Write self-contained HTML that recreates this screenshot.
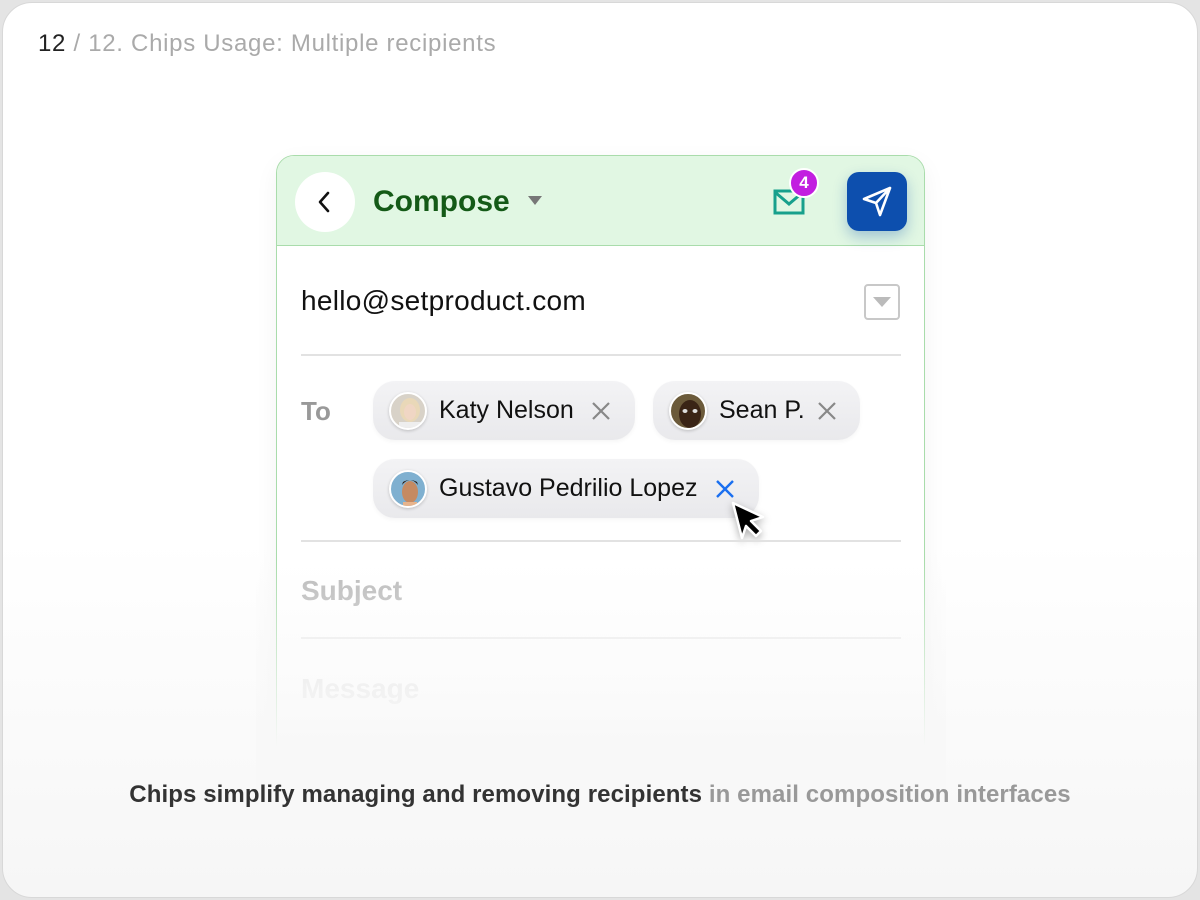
<!DOCTYPE html>
<html><head><meta charset="utf-8">
<style>
*{box-sizing:border-box;margin:0;padding:0}
body{width:1200px;height:900px;background:#e4e4e4;font-family:"Liberation Sans",sans-serif;position:relative;overflow:hidden}
.frame{position:absolute;left:2px;top:2px;width:1196px;height:896px;border-radius:30px;background:linear-gradient(#fff 0,#fff 60%,#f6f6f6 100%);border:1px solid #d8d8d8}
.title{position:absolute;left:38px;top:30px;font-size:24px;color:#aaa;letter-spacing:0.7px}
.title b{font-weight:normal;color:#222}
.card{position:absolute;left:276px;top:155px;width:649px;height:640px;border:1px solid #a9dcab;border-radius:18px;background:#fff;overflow:hidden;box-shadow:0 8px 24px rgba(0,0,0,0.05)}
.hdr{position:absolute;left:0;top:0;width:100%;height:90px;background:#e1f7e3;border-bottom:1px solid #a9dcab}
.back{position:absolute;left:18px;top:16px;width:60px;height:60px;border-radius:30px;background:#fff}
.compose{position:absolute;left:96px;top:29px;font-size:30px;font-weight:bold;color:#145a17}
.send{position:absolute;left:570px;top:16px;width:60px;height:59px;border-radius:12px;background:#0d4fae;box-shadow:0 6px 14px rgba(13,79,174,0.3)}
.badge{position:absolute;left:512px;top:12px;width:30px;height:30px;border-radius:15px;background:#c21ee0;border:2px solid #fff;color:#fff;font-size:17px;font-weight:bold;text-align:center;line-height:26px}
.email{position:absolute;left:24px;top:129px;font-size:28px;color:#111;letter-spacing:0.3px}
.line{position:absolute;left:24px;width:600px;height:2px;background:#e2e2e2}
.to{position:absolute;left:24px;top:240px;font-size:26px;color:#999;font-weight:bold}
.chip{position:absolute;height:59px;border-radius:22px;background:linear-gradient(#f3f3f5,#e9e9ec);font-size:25px;color:#111;box-shadow:0 2px 4px rgba(0,0,0,0.04)}
.chip .av{position:absolute;left:16px;top:11px;width:38px;height:38px;border-radius:19px;border:2px solid #fff;overflow:hidden;box-shadow:0 1px 3px rgba(0,0,0,.2)}
.chip span{position:absolute;left:66px;top:15px}
.chip svg.x{position:absolute;top:20px}
.ph{position:absolute;left:24px;font-size:28px;font-weight:bold}
.fade{position:absolute;left:256px;top:560px;width:690px;height:260px;background:linear-gradient(rgba(249,249,249,0) 0,rgba(249,249,249,0.6) 45%,#f8f8f8 72%)}
.cap{position:absolute;left:0;width:1200px;top:781px;text-align:center;font-size:24px;font-weight:bold;color:#999;letter-spacing:0.1px}
.cap b{color:#333}
</style></head><body>
<div class="frame"></div>
<div class="title"><b>12</b> / 12. Chips Usage: Multiple recipients</div>
<div class="card">
 <div class="hdr">
  <div class="back"><svg width="60" height="60"><path d="M33 21 L25 30 L33 39" fill="none" stroke="#111" stroke-width="2.6" stroke-linecap="round" stroke-linejoin="round"/></svg></div>
  <div class="compose">Compose</div>
  <svg style="position:absolute;left:251px;top:40px" width="14" height="10"><path d="M0 0H14L7 9Z" fill="#777"/></svg>
  <svg style="position:absolute;left:496px;top:32px" width="34" height="28"><rect x="2" y="3" width="28" height="22" fill="none" stroke="#17a08c" stroke-width="3"/><path d="M3 5 L16 16 L29 5" fill="none" stroke="#17a08c" stroke-width="3"/></svg>
  <div class="badge">4</div>
  <div class="send"><svg width="60" height="59"><path d="M43 16 L17 27 L29 31 L33 43 Z M43 16 L29 31" fill="none" stroke="#fff" stroke-width="2.6" stroke-linejoin="round" stroke-linecap="round"/></svg></div>
 </div>
 <div class="email">hello@setproduct.com</div>
 <svg style="position:absolute;left:587px;top:128px" width="37" height="36"><rect x="1" y="1" width="34" height="34" rx="3" fill="#fff" stroke="#c8c8c8" stroke-width="2"/><path d="M9 13H27L18 23Z" fill="#bbb"/></svg>
 <div class="line" style="top:198px"></div>
 <div class="to">To</div>
 <div class="chip" style="left:96px;top:225px;width:262px">
  <div class="av" style="background:#d8d2c8"><svg width="38" height="38"><ellipse cx="19" cy="16" rx="10" ry="12" fill="#e9d8b8"/><ellipse cx="19" cy="18" rx="6" ry="8" fill="#f0d6c4"/><rect x="8" y="28" width="22" height="12" fill="#eee"/></svg></div>
  <span>Katy Nelson</span>
  <svg class="x" style="left:218px" width="20" height="20"><path d="M2 2L18 18M18 2L2 18" stroke="#888" stroke-width="2.2"/></svg>
 </div>
 <div class="chip" style="left:376px;top:225px;width:207px">
  <div class="av" style="background:#6b5a3a"><svg width="38" height="38"><ellipse cx="19" cy="20" rx="11" ry="14" fill="#3a2416"/><ellipse cx="14" cy="17" rx="2.5" ry="2" fill="#ddd"/><ellipse cx="24" cy="17" rx="2.5" ry="2" fill="#ddd"/></svg></div>
  <span>Sean P.</span>
  <svg class="x" style="left:164px" width="20" height="20"><path d="M2 2L18 18M18 2L2 18" stroke="#888" stroke-width="2.2"/></svg>
 </div>
 <div class="chip" style="left:96px;top:303px;width:386px">
  <div class="av" style="background:#7fb0d0"><svg width="38" height="38"><ellipse cx="19" cy="20" rx="8" ry="11" fill="#c58a62"/><path d="M11 13 Q19 3 27 13 L26 10 Q19 6 12 10Z" fill="#2a1a10"/><rect x="12" y="30" width="14" height="8" fill="#e7b48c"/></svg></div>
  <span>Gustavo Pedrilio Lopez</span>
  <svg class="x" style="left:342px" width="20" height="20"><path d="M2 2L18 18M18 2L2 18" stroke="#1a6ff0" stroke-width="2.4"/></svg>
 </div>
 <svg style="position:absolute;left:452px;top:344px;filter:drop-shadow(0 3px 4px rgba(0,0,0,.3))" width="44" height="44"><path d="M4 3 L34 17 L22 21 L32 31 L27 36 L17 26 L13 38 Z" fill="#000" stroke="#fff" stroke-width="2.5" stroke-linejoin="round"/></svg>
 <div class="line" style="top:384px"></div>
 <div class="ph" style="top:419px;color:#bbb">Subject</div>
 <div class="line" style="top:481px;background:#ececec"></div>
 <div class="ph" style="top:517px;color:#e2e2e2">Message</div>
</div>
<div class="fade"></div>
<div class="cap"><b>Chips simplify managing and removing recipients</b> in email composition interfaces</div>
</body></html>
